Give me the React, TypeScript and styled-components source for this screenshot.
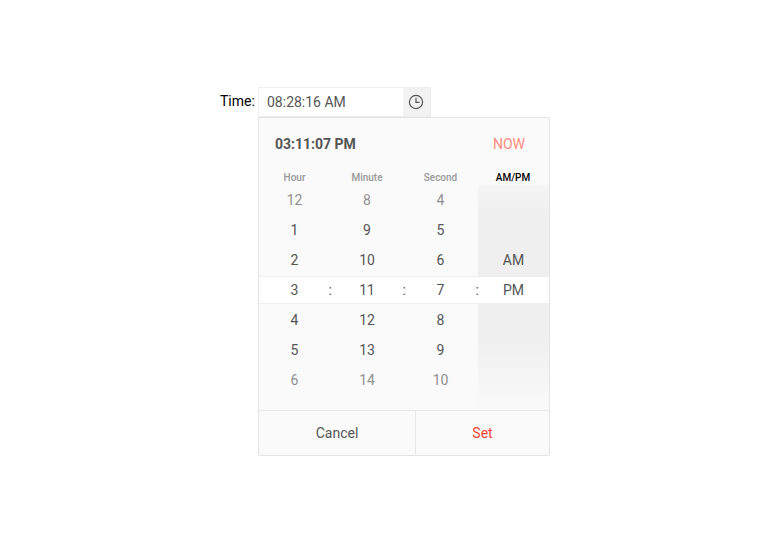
import { createGlobalStyle, styled } from 'styled-components';

const GlobalStyle = createGlobalStyle`
  html, body {
    margin: 0;
    padding: 0;
    background: #ffffff;
    font-family: Roboto, "Liberation Sans", sans-serif;
  }
`;

const columns = [
  { name: 'Hour', values: ['12', '1', '2', '3', '4', '5', '6'] },
  { name: 'Minute', values: ['8', '9', '10', '11', '12', '13', '14'] },
  { name: 'Second', values: ['4', '5', '6', '7', '8', '9', '10'] },
];

const meridiem = ['', '', 'AM', 'PM', '', '', ''];

const wheelGrid = '71px 74px 73px 1fr';

function ClockIcon() {
  return (
    <svg width="16" height="16" viewBox="0 0 16 16" fill="none" stroke="#555555" strokeWidth="1.2">
      <circle cx="8" cy="8" r="6.6" />
      <path d="M8 3.8V8.4H11.6" />
    </svg>
  );
}

function App() {
  return (
    <Page>
      <GlobalStyle />
      <Picker>
        <FieldRow>
          <FieldLabel>Time:</FieldLabel>
          <Field>
            <FieldValue>08:28:16 AM</FieldValue>
            <ClockButton>
              <ClockIcon />
            </ClockButton>
          </Field>
        </FieldRow>

        <Popup>
          <PopupHeader>
            <CurrentTime>03:11:07 PM</CurrentTime>
            <NowButton>NOW</NowButton>
          </PopupHeader>

          <ColumnTitles>
            {columns.map((column) => (
              <ColumnTitle key={column.name}>{column.name}</ColumnTitle>
            ))}
            <ColumnTitle $active>AM/PM</ColumnTitle>
          </ColumnTitles>

          <Wheels>
            {[0, 1, 2, 3, 4, 5, 6].map((row) => (
              <WheelRow key={row} $selected={row === 3} $faded={row === 0 || row === 6}>
                {columns.map((column) => (
                  <WheelCell key={column.name}>
                    {column.values[row]}
                    {row === 3 && <Colon>:</Colon>}
                  </WheelCell>
                ))}
                <MeridiemCell>{meridiem[row]}</MeridiemCell>
              </WheelRow>
            ))}
          </Wheels>

          <PopupFooter>
            <FooterButton>Cancel</FooterButton>
            <FooterButton $primary>Set</FooterButton>
          </PopupFooter>
        </Popup>
      </Picker>
    </Page>
  );
}

const Page = styled.div`
  display: flex;
  justify-content: flex-start;
  padding: 87px 0 0 220px;
  min-height: 467px;
`;

const Picker = styled.div`
  display: flex;
  flex-direction: column;
  width: 330px;
`;

const FieldRow = styled.div`
  display: flex;
  align-items: center;
  height: 30px;
`;

const FieldLabel = styled.label`
  width: 38px;
  margin-top: -2px;
  font-size: 14px;
  color: #000000;
`;

const Field = styled.div`
  display: flex;
  box-sizing: border-box;
  width: 173px;
  height: 30px;
  border: 1px solid #eeeeee;
  background: #ffffff;
`;

const FieldValue = styled.div`
  flex: 1;
  padding-left: 8px;
  line-height: 28px;
  font-size: 14px;
  color: #555555;
`;

const ClockButton = styled.div`
  display: flex;
  align-items: center;
  justify-content: center;
  width: 27px;
  padding-right: 1px;
  box-sizing: border-box;
  background: #f2f2f2;
`;

const Popup = styled.div`
  box-sizing: border-box;
  display: flex;
  flex-direction: column;
  width: 292px;
  height: 339px;
  margin: 0 0 0 38px;
  border: 1px solid #e4e4e4;
  border-radius: 2px;
  background: #fafafa;
`;

const PopupHeader = styled.div`
  display: flex;
  align-items: center;
  justify-content: space-between;
  height: 51px;
  padding: 0 24px 0 16px;
`;

const CurrentTime = styled.div`
  font-size: 14px;
  font-weight: 700;
  color: #555555;
`;

const NowButton = styled.div`
  font-size: 14px;
  color: #ff8a80;
`;

const ColumnTitles = styled.div`
  display: grid;
  grid-template-columns: ${wheelGrid};
  align-items: center;
  height: 16px;
`;

const ColumnTitle = styled.div<{ $active?: boolean }>`
  text-align: center;
  font-size: 10px;
  font-weight: 500;
  color: ${({ $active }) => ($active ? '#000000' : '#999999')};
`;

const Wheels = styled.div`
  display: flex;
  flex-direction: column;
  flex: 1;
  background: linear-gradient(#f5f5f5, #efefef 14%, #efefef 68%, #fafafa) no-repeat right / 71px 100%;
`;

const WheelRow = styled.div<{ $selected?: boolean; $faded?: boolean }>`
  display: grid;
  grid-template-columns: ${wheelGrid};
  align-items: stretch;
  box-sizing: border-box;
  height: ${({ $selected }) => ($selected ? '28px' : '30px')};
  margin: ${({ $selected }) => ($selected ? '1px 0' : '0')};
  font-size: 14px;
  color: ${({ $faded }) => ($faded ? '#909090' : '#555555')};
  background: ${({ $selected }) => ($selected ? '#ffffff' : 'transparent')};
  border-top: ${({ $selected }) => ($selected ? '1px solid #eeeeee' : '0')};
  border-bottom: ${({ $selected }) => ($selected ? '1px solid #eeeeee' : '0')};
`;

const WheelCell = styled.div`
  position: relative;
  display: flex;
  align-items: center;
  justify-content: center;
`;

const Colon = styled.span`
  position: absolute;
  right: -2px;
  top: 50%;
  transform: translateY(-50%);
`;

const MeridiemCell = styled.div`
  display: flex;
  align-items: center;
  justify-content: center;
  margin-left: 1px;
`;

const PopupFooter = styled.div`
  box-sizing: border-box;
  display: grid;
  grid-template-columns: 156px 1fr;
  height: 45px;
  border-top: 1px solid #e8e8e8;
`;

const FooterButton = styled.div<{ $primary?: boolean }>`
  display: flex;
  align-items: center;
  justify-content: center;
  font-size: 14px;
  color: ${({ $primary }) => ($primary ? '#f44336' : '#555555')};
  border-left: ${({ $primary }) => ($primary ? '1px solid #e8e8e8' : '0')};
`;

export default App;
